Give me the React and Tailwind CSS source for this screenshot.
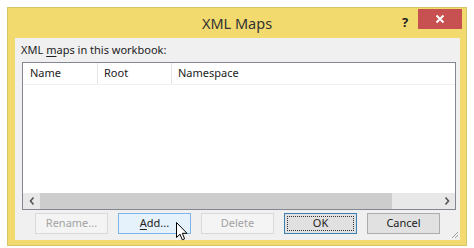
import React from 'react';

const font = { fontFamily: '"Noto Sans", "Open Sans", sans-serif' };

function Btn({ label, ul, kind }) {
  const base = 'w-[73px] h-[21px] flex items-center justify-center text-[11px] border';
  const styles = {
    disabled: 'bg-[#f4f4f4] border-[#d9d9d9] text-[#a3a3a3]',
    hover: 'bg-[#e5f1fb] border-[#7eb4ea] text-[#222]',
    focus: 'bg-[#e1e1e1] border-[#3c7fb1] text-[#222]',
    normal: 'bg-[#e1e1e1] border-[#adadad] text-[#222]',
  };
  return (
    <div className={`${base} ${styles[kind]}`}>
      {kind === 'focus' ? (
        <div className="w-[67px] h-[15px] border border-dotted border-[#333] flex items-center justify-center">
          {label}
        </div>
      ) : ul ? (
        <span>
          <span className="underline underline-offset-2">{ul}</span>
          {label.slice(ul.length)}
        </span>
      ) : (
        label
      )}
    </div>
  );
}

export default function App() {
  return (
    <div className="w-[474px] h-[248px] bg-white overflow-hidden pt-[7px] pl-[7px]" style={font}>
      <div className="w-[460px] h-[239px] border border-[#d8c56a] bg-[#f2da6e] flex flex-col">
        {/* title bar */}
        <div className="relative h-[30px] flex items-center justify-center">
          <span className="text-[14.5px] text-[#333] mt-[1px]">XML Maps</span>
          <span className="absolute left-[394px] top-[5px] text-[13px] font-bold text-[#222]">?</span>
          <div className="absolute right-[4px] top-[1px] w-[44px] h-[20px] bg-[#c75050] flex items-center justify-center">
            <svg width="10" height="10" viewBox="0 0 10 10">
              <path d="M1.5 1.5 L8.5 8.5 M8.5 1.5 L1.5 8.5" stroke="#fff" strokeWidth="2" />
            </svg>
          </div>
        </div>

        {/* body */}
        <div className="relative ml-[7px] mr-[6px] h-[202px] bg-[#f0f0f0] pl-[6px] pr-[4px] flex flex-col">
          <div className="h-[24px] flex items-center text-[11px] text-[#222]">
            XML <span className="underline underline-offset-2 ml-[3px]">m</span>
            <span>aps in this workbook:</span>
          </div>

          <div className="ml-[1px] h-[148px] border border-[#828790] bg-white flex flex-col">
            <div className="h-[22px] flex text-[11px] text-[#222] border-b border-[#f0f0f0]">
              <div className="w-[75px] pl-[7px] flex items-center border-r border-[#e5e5e5]">Name</div>
              <div className="w-[74px] pl-[6px] flex items-center border-r border-[#e5e5e5]">Root</div>
              <div className="flex-1 pl-[6px] flex items-center">Namespace</div>
            </div>
            <div className="flex-1" />
            <div className="h-[16px] flex bg-[#e8e8e8]">
              <div className="w-[17px] flex items-center justify-center">
                <svg width="6" height="8" viewBox="0 0 6 8">
                  <path d="M4.5 0.5 L1.5 4 L4.5 7.5" stroke="#555" strokeWidth="1.6" fill="none" />
                </svg>
              </div>
              <div className="w-[352px] bg-[#cdcdcd]" />
              <div className="flex-1" />
              <div className="w-[17px] flex items-center justify-center">
                <svg width="6" height="8" viewBox="0 0 6 8">
                  <path d="M1.5 0.5 L4.5 4 L1.5 7.5" stroke="#555" strokeWidth="1.6" fill="none" />
                </svg>
              </div>
            </div>
          </div>

          <div className="mt-[3px] ml-[14px] flex gap-[10px]">
            <Btn label="Rename..." kind="disabled" />
            <Btn label="Add..." ul="A" kind="hover" />
            <Btn label="Delete" kind="disabled" />
            <Btn label="OK" kind="focus" />
            <Btn label="Cancel" kind="normal" />
          </div>

          {/* resize grip */}
          <svg className="absolute right-[1px] bottom-[1px]" width="8" height="8" viewBox="0 0 8 8">
            <path d="M7 1 L1 7 M7 4 L4 7" stroke="#a0a0a0" strokeWidth="1" />
          </svg>

          {/* mouse cursor */}
          <svg className="absolute left-[161px] top-[184px]" width="12" height="19" viewBox="0 0 12 19">
            <path d="M0.5 0.5 L0.5 15.5 L4 12.2 L6.3 17.8 L8.6 16.8 L6.3 11.3 L11 11.3 Z" fill="#fff" stroke="#000" strokeWidth="1" strokeLinejoin="round" />
          </svg>
        </div>
      </div>
    </div>
  );
}
